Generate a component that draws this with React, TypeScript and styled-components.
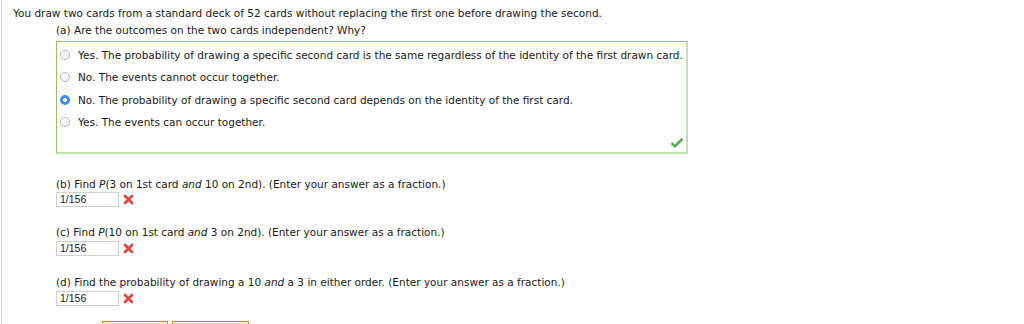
import styled, { createGlobalStyle } from 'styled-components';

const GlobalStyle = createGlobalStyle`
  body {
    margin: 0;
    background: #fff;
    font-family: Verdana, "DejaVu Sans", sans-serif;
    font-size: 10.5px;
    color: #1a1a1a;
  }
`;

const options = [
  'Yes. The probability of drawing a specific second card is the same regardless of the identity of the first drawn card.',
  'No. The events cannot occur together.',
  'No. The probability of drawing a specific second card depends on the identity of the first card.',
  'Yes. The events can occur together.',
];
const selected = 2;

const Page = styled.div`
  height: 324px;
  overflow: hidden;
  border-left: 1px solid #d8d8d8;
  margin-left: 1px;
  padding: 7px 0 0 11px;
  box-sizing: border-box;
`;

const Intro = styled.div`
  line-height: 12px;
`;

const Part = styled.div`
  margin-left: 43px;
`;

const Question = styled.div<{ $top: number }>`
  line-height: 12px;
  margin-top: ${(p) => p.$top}px;
`;

const ChoiceBox = styled.div`
  position: relative;
  width: 632px;
  height: 113px;
  margin-top: 5px;
  border: 1px solid #8cc460;
  border-right: 2px solid #c3e0ae;
  border-bottom: 2px solid #c3e0ae;
  padding: 2px 0 0 3px;
  box-sizing: border-box;
`;

const Choice = styled.div`
  display: flex;
  align-items: center;
  height: 22.3px;
`;

const Radio = styled.span<{ $on: boolean }>`
  flex-shrink: 0;
  width: 10px;
  height: 10px;
  border-radius: 50%;
  box-sizing: border-box;
  margin-right: 8px;
  border: ${(p) => (p.$on ? 'none' : '1px solid #b5b5b5')};
  background: ${(p) =>
    p.$on
      ? 'radial-gradient(circle, #fff 0 1.6px, #3d8ff0 2.2px)'
      : 'linear-gradient(#fff, #f1f1f1)'};
`;

const Check = styled.svg`
  position: absolute;
  right: 2px;
  bottom: 4px;
`;

const AnswerRow = styled.div<{ $top: number }>`
  display: flex;
  align-items: center;
  margin-top: ${(p) => p.$top}px;
`;

const AnswerInput = styled.div`
  width: 63px;
  height: 15px;
  border: 1px solid #cfcfcf;
  box-sizing: border-box;
  padding: 0 3px;
  font-family: "Liberation Sans", Arial, sans-serif;
  font-size: 10.5px;
  line-height: 13px;
  color: #222;
`;

const Cross = styled.svg`
  margin-left: 4px;
`;

const Footer = styled.div`
  display: flex;
  align-items: flex-start;
  margin-top: 15px;
  margin-left: 6px;
  gap: 4px;
`;

const Help = styled.span`
  color: #e07b00;
  font-weight: bold;
  font-size: 11px;
  margin-right: 8px;
  margin-top: 2px;
`;

const Button = styled.div<{ $w: number }>`
  width: ${(p) => p.$w}px;
  height: 20px;
  border: 1px solid #c8883c;
  background: linear-gradient(#fbe3c6, #f3c68e);
  box-shadow: inset 0 0 0 1px #fff4e6;
  box-sizing: border-box;
`;

const CrossIcon = () => (
  <Cross width="11" height="11" viewBox="0 0 11 11">
    <path d="M2 2 L9 9 M9 2 L2 9" stroke="#e8403f" strokeWidth="2.6" strokeLinecap="round" />
  </Cross>
);

const answers = [
  {
    label: <>(b) Find <i>P</i>(3 on 1st card <i>and</i> 10 on 2nd). (Enter your answer as a fraction.)</>,
    top: 24,
    gap: 2,
  },
  {
    label: <>(c) Find <i>P</i>(10 on 1st card <i>and</i> 3 on 2nd). (Enter your answer as a fraction.)</>,
    top: 19,
    gap: 3,
  },
  {
    label: <>(d) Find the probability of drawing a 10 <i>and</i> a 3 in either order. (Enter your answer as a fraction.)</>,
    top: 20,
    gap: 3,
  },
];

const App = () => (
  <>
    <GlobalStyle />
    <Page>
      <Intro>
        You draw two cards from a standard deck of 52 cards without replacing the first one before drawing the second.
      </Intro>
      <Part>
        <Question $top={5}>(a) Are the outcomes on the two cards independent? Why?</Question>
        <ChoiceBox>
          {options.map((o, i) => (
            <Choice key={i}>
              <Radio $on={i === selected} />
              {o}
            </Choice>
          ))}
          <Check width="14" height="11" viewBox="0 0 14 11">
            <path d="M1.5 6 L5 9.2 L12.5 1.8" stroke="#55b055" strokeWidth="2.6" fill="none" strokeLinejoin="round" />
          </Check>
        </ChoiceBox>
        {answers.map((a, i) => (
          <div key={i}>
            <Question $top={a.top}>{a.label}</Question>
            <AnswerRow $top={a.gap}>
              <AnswerInput>1/156</AnswerInput>
              <CrossIcon />
            </AnswerRow>
          </div>
        ))}
      </Part>
      <Footer>
        <Help>Need Help?</Help>
        <Button $w={66} />
        <Button $w={77} />
      </Footer>
    </Page>
  </>
);

export default App;
